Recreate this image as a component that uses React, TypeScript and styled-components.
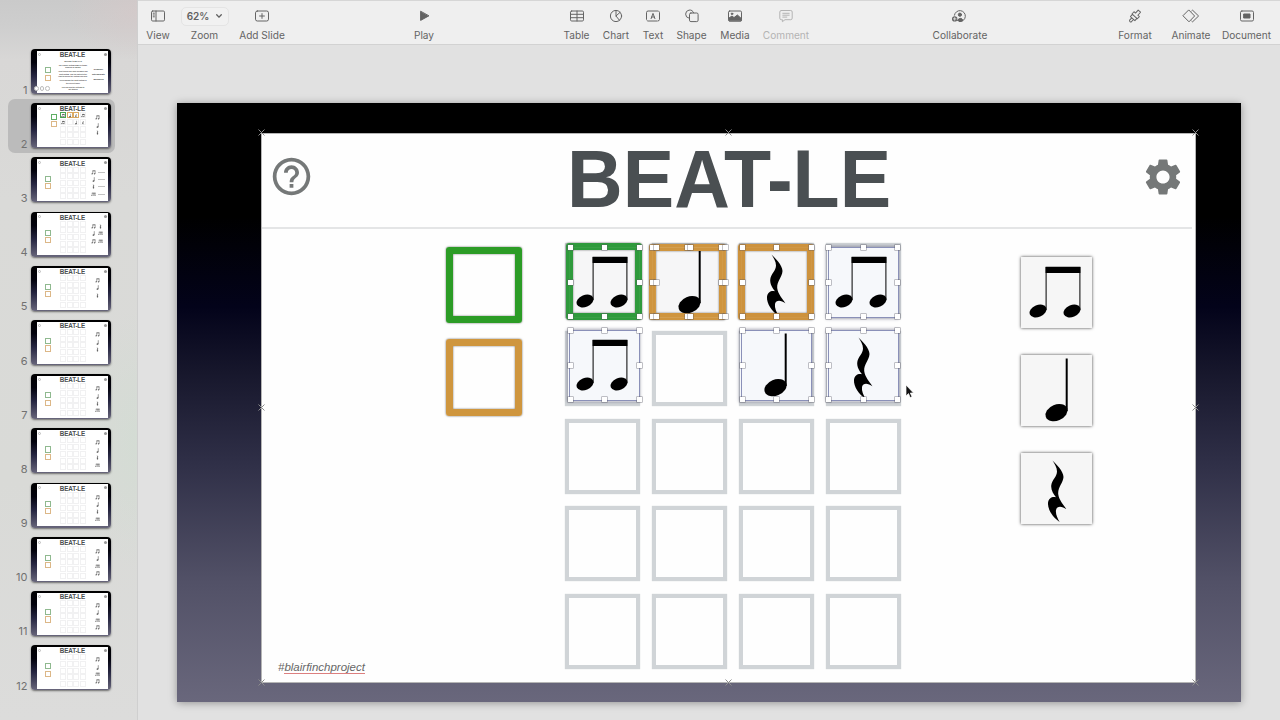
import React from 'react';
import styled, { createGlobalStyle } from 'styled-components';
import { MdHelpOutline, MdSettings } from 'react-icons/md';

const Global = createGlobalStyle`
  * { box-sizing: border-box; }
  body { margin: 0; font-family: Inter, "Liberation Sans", sans-serif; background: #e1e1e1; }
`;

/* ---------- window ---------- */

const Window = styled.div`
  display: flex;
  width: 1280px;
  height: 720px;
  overflow: hidden;
  background: #e1e1e1;
`;

const Main = styled.div`
  flex: 1;
  min-width: 0;
  display: flex;
  flex-direction: column;
`;

/* ---------- toolbar ---------- */

const Toolbar = styled.header`
  display: flex;
  height: 45px;
  flex: none;
  background: #efefef;
  border-top: 1px solid #d6d6d6;
  border-bottom: 1px solid #d2d2d2;
`;

const Tool = styled.div<{ $w: number; $ml?: number; $dim?: boolean }>`
  width: ${p => p.$w}px;
  margin-left: ${p => p.$ml ?? 0}px;
  display: flex;
  flex-direction: column;
  align-items: center;
  color: ${p => (p.$dim ? '#b4b4b4' : '#646464')};
`;

const ToolIcon = styled.div`
  height: 20px;
  margin-top: 5px;
  display: flex;
  align-items: center;
  justify-content: center;
  svg { display: block; }
`;

const ToolLabel = styled.div`
  margin-top: 2px;
  font-size: 10.100px;
  line-height: 14px;
  white-space: nowrap;
`;

const ZoomBox = styled.div`
  display: flex;
  align-items: center;
  justify-content: center;
  gap: 7px;
  width: 48px;
  height: 19px;
  border: 1px solid #e4e4e4;
  border-radius: 5px;
  background: #f1f1f1;
  font-size: 10px;
  font-weight: 600;
  color: #606060;
`;

const Icon = ({ children, w = 18, h = 16 }: { children: React.ReactNode; w?: number; h?: number }) => (
  <svg width={w} height={h} viewBox={`0 0 ${w} ${h}`} fill="none" stroke="currentColor" strokeWidth="1" strokeLinecap="round" strokeLinejoin="round">
    {children}
  </svg>
);

const icons = {
  view: <Icon><rect x="2.500" y="3" width="13" height="10" rx="1.200" /><path d="M7 3v10M4.200 5.200h1.200M4.200 7h1.200M4.200 8.800h1.200" /></Icon>,
  add: <Icon><rect x="2.500" y="3" width="13" height="10" rx="1.800" /><path d="M9 5.600v4.800M6.600 8h4.800" /></Icon>,
  play: <Icon><path d="M5.600 3.600v8.800L13.600 8z" fill="currentColor" /></Icon>,
  table: <Icon><rect x="2.500" y="3" width="13" height="10" rx="1.200" /><path d="M2.500 6.300h13M2.500 9.700h13M9 3v10" /></Icon>,
  chart: <Icon><circle cx="9" cy="8" r="5.600" /><path d="M9 2.400V8l3.400 4.200M9 8l4-3.600" /></Icon>,
  text: (
    <Icon>
      <rect x="2.500" y="3" width="13" height="10" rx="1.600" strokeDasharray="10 1" />
      <path d="M7.100 10.600 9 5.400l1.900 5.200M7.800 9h2.400" />
    </Icon>
  ),
  shape: <Icon><path d="M6 10.200a4.100 4.100 0 1 1 4.600-5.400" /><rect x="6.500" y="5" width="8.600" height="8.600" rx="1.400" /></Icon>,
  media: (
    <Icon>
      <rect x="2.500" y="3" width="13" height="10" rx="1.200" />
      <path d="M3 12.600V10l3-2 2 1.600L11.400 7l3.800 3.400v2.200z" fill="currentColor" />
      <circle cx="6" cy="5.800" r=".8" fill="currentColor" />
    </Icon>
  ),
  comment: <Icon><path d="M4.300 2.500h9.400a1.500 1.500 0 0 1 1.500 1.500v6.200a1.500 1.500 0 0 1-1.500 1.500H8l-2.600 2v-2H4.300a1.500 1.500 0 0 1-1.500-1.500V4a1.500 1.500 0 0 1 1.500-1.500zM5.800 5.300h6.400M5.800 7.200h6.400M5.800 9.100h4" /></Icon>,
  collab: (
    <Icon>
      <path d="M3.400 7.200a5.500 5.500 0 1 1 5 6.400" />
      <circle cx="8.900" cy="6.700" r="1.600" fill="currentColor" />
      <path d="M6.900 12.600c0-3 4.600-3 5 0-1.400 1-3.400 1.200-5 0z" fill="currentColor" />
      <circle cx="3.700" cy="10.900" r="2.700" fill="currentColor" stroke="none" />
      <path d="M3.700 9.600v2.600M2.400 10.900h2.600" stroke="#efefef" strokeWidth=".8" />
    </Icon>
  ),
  format: <Icon><g transform="rotate(42 9 8)"><path d="M7.400 1.500h3.200v4h2v3H5.400v-3h2zM6 8.500v3h6v-3M7.800 11.500v3.200c.3 1 2.100 1 2.400 0v-3.200" /></g></Icon>,
  animate: <Icon><path d="M7 2.200 12.600 8 7 13.800 1.200 8zM9.800 2.800l.8-.6L16.600 8l-6 5.800-.8-.6" /></Icon>,
  doc: <Icon><rect x="2.500" y="3" width="13" height="10" rx="1.400" /><rect x="6" y="6" width="6" height="4" fill="currentColor" /></Icon>,
};

/* ---------- music symbols ---------- */

type Sym = 'eighths' | 'quarter' | 'rest' | 'sixteenths';

const Drawing = styled.svg`
  display: block;
`;

const Music = ({ kind, size = 71, bold = 0 }: { kind: Sym; size?: number; bold?: number }) => (
  <Drawing width={size} height={size} viewBox="0 0 71 71" fill="#000" stroke="#000" strokeWidth={bold}>
    {kind === 'eighths' && (
      <>
        <path d="M24.600 9.700h34.800v6.200H24.600z" />
        <path d="M24.600 10h1v43h-1zM58.400 10h1v43h-1z" />
        <ellipse cx="17" cy="54" rx="8.900" ry="5.900" transform="rotate(-22 17 54)" />
        <ellipse cx="51" cy="54" rx="8.900" ry="5.900" transform="rotate(-22 51 54)" />
      </>
    )}
    {kind === 'quarter' && (
      <>
        <path d="M44.700 3.500h2V56h-2z" />
        <ellipse cx="35.500" cy="57.600" rx="11.500" ry="8" transform="rotate(-22 35.500 57.600)" />
      </>
    )}
    {kind === 'rest' && (
      <path d="M31.500 7.500C35 11 42.500 18 42.500 24C42.200 30 36.800 34 37.200 41C38 47 42 51 45.400 56.200C41 53 36 52.500 35 57C34.400 61 36.500 65 38.600 68.900C32 64.500 26.500 56.500 27 50C27.500 45 31.500 43.300 35 44.300C32.500 41 29.600 37 30.300 32C31 27 36 23.500 36 18.500C36 14.500 33.500 10.500 31.500 7.500Z" />
    )}
    {kind === 'sixteenths' && (
      <>
        <path d="M12 12h54v6H12zM12 26h54v5H12zM12 12h2v42h-2zM29 12h2v42h-2zM46 12h2v42h-2zM64 12h2v42h-2z" />
        <path d="M2 50h12v7H2zM20 50h11v7H20zM37 50h11v7H37zM54 50h12v7H54z" />
      </>
    )}
  </Drawing>
);

/* ---------- slide navigator ---------- */

const Sidebar = styled.nav`
  width: 138px;
  flex: none;
  padding: 44.900px 0 0 8px;
  border-right: 1px solid #cfcfcf;
  background:
    radial-gradient(70px 50px at 138px 10px, rgba(218, 200, 200, 0.5), transparent),
    radial-gradient(60px 130px at 138px 440px, rgba(205, 222, 208, 0.45), transparent),
    linear-gradient(#cacaca 0, #cecece 26px, #d8d7d6 60px, #dadad8 200px, #d9dad7 480px, #dcdcdb 100%);
`;

const SlideRow = styled.div<{ $on?: boolean }>`
  display: flex;
  align-items: flex-end;
  width: 107px;
  height: 54.200px;
  padding: 0 4px 5px 0;
  border-radius: 7px;
  background: ${p => (p.$on ? '#bbbbbb' : 'transparent')};
`;

const SlideNo = styled.div`
  width: 19.500px;
  margin-right: 3.500px;
  text-align: right;
  font: 11px/13px Inter, sans-serif;
  margin-bottom: -2.500px;
  color: #717171;
`;

const Thumb = styled.div`
  width: 79.500px;
  height: 45px;
  padding: 1.800px 2.600px 1.200px 6px;
  border-radius: 4px;
  overflow: hidden;
  background: linear-gradient(#000 0, #02020c 30%, #252540 60%, #68667b 100%);
  box-shadow: 0 1px 2px rgba(0, 0, 0, 0.5);
`;

const MiniBoard = styled.div`
  position: relative;
  height: 100%;
  background: #fff;
`;

const MiniTitle = styled.div`
  padding-top: 0.300px;
  text-align: center;
  font: bold 6.300px/7px "Liberation Sans", sans-serif;
  letter-spacing: -0.180px;
  color: #4b4f52;
`;

const MiniDot = styled.i<{ $right?: boolean }>`
  position: absolute;
  top: 2px;
  ${p => (p.$right ? 'right: 1px; background: #999;' : 'left: 1px; border: 0.500px solid #bbb;')}
  width: 3px;
  height: 3px;
  border-radius: 50%;
`;

const MiniBody = styled.div<{ $shift?: boolean }>`
  display: grid;
  grid-template-columns: ${p => (p.$shift ? '13.500px 6px 3.500px 26px 1fr' : '7.500px 6px 9.500px 26px 1fr')};
`;

const MiniLegend = styled.div<{ $top: number }>`
  grid-column: 2;
  padding-top: ${p => p.$top}px;
  display: flex;
  flex-direction: column;
  gap: 1.200px;
`;

const MiniFrame = styled.i<{ $c: string }>`
  height: 6.200px;
  border: 1px solid ${p => p.$c};
`;

const MiniGrid = styled.div`
  grid-column: 4;
  display: grid;
  grid-template-columns: repeat(4, 6px);
  grid-auto-rows: 6px;
  gap: 0.700px;
`;

const MiniCell = styled.div<{ $c?: string }>`
  display: flex;
  align-items: center;
  justify-content: center;
  border: 1px solid ${p => p.$c ?? '#f1f1f2'};
`;

const MiniPalette = styled.div<{ $cols: number }>`
  grid-column: 5;
  display: grid;
  grid-template-columns: repeat(${p => p.$cols}, 5px);
  grid-auto-rows: 5px;
  gap: 2.400px;
  padding-top: 3px;
  margin-left: ${p => (p.$cols > 1 ? 4.5 : 8.5)}px;
  align-items: center;
  opacity: 0.75;
`;

const MiniRule = styled.i`
  width: 7px;
  height: 1px;
  background: #b0b0b0;
`;

const MiniText = styled.div`
  grid-column: 4;
  display: flex;
  flex-direction: column;
  align-items: center;
  width: 26px;
  padding-top: 1.500px;
  text-align: center;
  font: bold 1.750px/2.400px "Liberation Sans", sans-serif;
  color: #444;
  p { margin: 0 0 1.700px; white-space: nowrap; }
`;

const MiniLevels = styled.div`
  grid-column: 5;
  padding: 9px 0 0 3px;
  text-align: center;
  font: bold 2.200px/5px "Liberation Sans", sans-serif;
  color: #333;
`;

const MiniRings = styled.div`
  position: absolute;
  left: -3px;
  bottom: 2px;
  display: flex;
  gap: 1px;
  i { width: 4.600px; height: 4.600px; border: 0.500px solid #bbb; border-radius: 50%; background: #fff; }
`;

const GREEN = '#8fb98f';
const ORANGE = '#dcb787';

const three: Sym[] = ['eighths', 'quarter', 'rest'];
const four: Sym[] = [...three, 'sixteenths'];
const mixed: Sym[] = ['eighths', 'quarter', 'sixteenths', 'eighths'];

const palettes: (Sym | 'rule')[][] = [
  [],
  three,
  ['eighths', 'rule', 'quarter', 'rule', 'rest', 'rule', 'sixteenths', 'rule'],
  ['eighths', 'rest', 'quarter', 'sixteenths', 'eighths', 'sixteenths'],
  three,
  three,
  four,
  four,
  four,
  mixed,
  mixed,
  mixed,
];

const guesses: { c?: string; s?: Sym }[] = [
  { c: '#4ba454', s: 'eighths' },
  { c: '#dcaa62', s: 'quarter' },
  { c: '#dcaa62', s: 'rest' },
  { s: 'eighths' },
  { s: 'eighths' },
  {},
  { s: 'quarter' },
  { s: 'rest' },
];

const MiniSlide = ({ n }: { n: number }) => (
  <Thumb>
    <MiniBoard>
      <MiniDot />
      <MiniDot $right />
      <MiniTitle>BEAT-LE</MiniTitle>
      <MiniBody $shift={n === 2}>
        <MiniLegend $top={n === 2 ? 1.2 : 9}>
          <MiniFrame $c={n === 2 ? '#5fae64' : GREEN} />
          <MiniFrame $c={ORANGE} />
        </MiniLegend>
        {n === 1 ? (
          <>
            <MiniText>
              <p>Welcome to BEAT-LE</p>
              <p>The classic rhythm game of today,<br />inspired by Wordle</p>
              <p>Your teacher will play a hidden four<br />beat rhythm. Use the notes to the<br />right to guess the rhythm you hear.</p>
              <p>Green means the right rhythm in<br />the correct place</p>
              <p>You can find the settings to<br />get started</p>
            </MiniText>
            <MiniLevels>beginner<br />intermediate<br />advanced</MiniLevels>
          </>
        ) : (
          <>
            <MiniGrid>
              {Array.from({ length: 20 }, (_, i) => {
                const g = n === 2 ? guesses[i] : undefined;
                return <MiniCell key={i} $c={g?.c}>{g?.s && <Music kind={g.s} size={5} bold={2} />}</MiniCell>;
              })}
            </MiniGrid>
            <MiniPalette $cols={n === 3 || n === 4 ? 2 : 1}>
              {palettes[n - 1].map((s, i) => (s === 'rule' ? <MiniRule key={i} /> : <Music key={i} kind={s} size={5} bold={s === 'sixteenths' ? 0 : 3} />))}
            </MiniPalette>
          </>
        )}
      </MiniBody>
      {n === 1 && <MiniRings><i /><i /><i /></MiniRings>}
    </MiniBoard>
  </Thumb>
);

/* ---------- slide canvas ---------- */

const Stage = styled.main`
  flex: 1;
  padding: 58px 39px 18px 39px;
  background: #e1e1e1;
`;

const Slide = styled.section`
  width: 1064px;
  height: 599px;
  padding: 29.500px 45px 19px 84px;
  background: linear-gradient(#000 0, #000 19%, #03031a 34%, #17172c 45%, #2f2f47 60%, #525167 80%, #69677c 100%);
  box-shadow: 0 1px 8px rgba(0, 0, 0, 0.35);
`;

const Board = styled.div`
  position: relative;
  width: 935px;
  height: 550.500px;
  display: flex;
  flex-direction: column;
  background: #fefefe;
  border: 1px solid #b5b5b5;
`;

const BoardHead = styled.div`
  display: flex;
  align-items: center;
  justify-content: space-between;
  height: 95px;
  flex: none;
  margin-right: 3px;
  padding: 0 7px 7px 7px;
  border-bottom: 2px solid #e4e5e6;
  color: #757878;
  svg { display: block; }
`;

const Title = styled.h1`
  margin: 0 -22px 0 -18px;
  padding-top: 5px;
  font: bold 81.400px/84px "Liberation Sans", sans-serif;
  transform: scaleX(0.947);
  color: #4a4f52;
`;

const BoardBody = styled.div`
  display: flex;
  align-items: flex-start;
`;

const Legend = styled.div`
  display: flex;
  flex-direction: column;
  gap: 16px;
  margin: 18px 0 0 184px;
`;

const Frame = styled.div<{ $c: string; $w?: number; $h?: number }>`
  width: ${p => p.$w ?? 76}px;
  height: ${p => p.$h ?? 76.5}px;
  border: 7px solid ${p => p.$c};
  border-radius: 3px;
  box-shadow: 0 0 2px rgba(0, 0, 0, 0.65), inset 0 0 2px rgba(0, 0, 0, 0.6);
`;

const Grid = styled.div`
  display: grid;
  grid-template-columns: repeat(4, 75px);
  grid-auto-rows: 75px;
  column-gap: 12.100px;
  row-gap: 12.800px;
  margin: 14.500px 0 0 43px;
`;

const Cell = styled.div`
  border: 4px solid #d0d4d7;
  box-shadow: 0 0 1px #ced2d5;
`;

const Palette = styled.div`
  display: flex;
  flex-direction: column;
  gap: 27px;
  margin: 28px 0 0 119.700px;
`;

const Card = styled.div`
  width: 71px;
  height: 71px;
  background: #f6f6f6;
  box-shadow: 0 0 3px rgba(0, 0, 0, 0.75);
`;

const HashTag = styled.div`
  margin: -9.500px 0 0 16px;
  font: italic 11.500px/14px "Liberation Sans", sans-serif;
  color: #666;
  span { border-bottom: 1px solid #dc7f7f; display: inline-block; line-height: 11px; }
`;

/* Objects dropped freely on the slide */
const Placed = styled.div<{ $x: number; $y: number }>`
  position: absolute;
  left: ${p => p.$x - 262}px;
  top: ${p => p.$y - 134}px;
`;

const Piece = styled.div<{ $bare?: boolean }>`
  width: 71px;
  height: 71px;
  background: ${p => (p.$bare ? '#f6f8fb' : '#f6f6f7')};
  box-shadow: ${p => (p.$bare ? '0 0 3px 1px rgba(70, 72, 100, 0.45)' : 'none')};
`;

const Selection = styled.div<{ $w: number; $h: number; $faint?: boolean }>`
  position: relative;
  width: ${p => p.$w}px;
  height: ${p => p.$h}px;
  border: 1px solid ${p => (p.$faint ? 'rgba(255, 255, 255, 0.05)' : '#8a90b8')};
`;

const Handle = styled.i<{ $l: number; $t: number }>`
  position: absolute;
  left: calc(${p => p.$l}% - 2.500px);
  top: calc(${p => p.$t}% - 2.500px);
  width: 5px;
  height: 5px;
  background: #fff;
  box-shadow: 0 0 0 0.600px rgba(90, 90, 100, 0.6);
`;

const spots = [[0, 0], [50, 0], [100, 0], [0, 50], [100, 50], [0, 100], [50, 100], [100, 100]];

const Handles = ({ faint }: { faint?: boolean }) => (
  <Selection $w={71} $h={71} $faint={faint}>
    {spots.map(([l, t]) => <Handle key={`${l}-${t}`} $l={l} $t={t} />)}
  </Selection>
);

type Item = { s: Sym; x: number; y: number; frame?: { c: string; x: number; y: number; w?: number } };

const items: Item[] = [
  { s: 'eighths', x: 568.4, y: 247, frame: { c: '#2f9a3c', x: 566.2, y: 243.8 } },
  { s: 'quarter', x: 654.4, y: 247, frame: { c: '#cf953f', x: 649, y: 244, w: 77 } },
  { s: 'rest', x: 740.4, y: 247, frame: { c: '#cd923d', x: 738, y: 244.3 } },
  { s: 'eighths', x: 826.9, y: 247 },
  { s: 'eighths', x: 568.4, y: 330.3 },
  { s: 'quarter', x: 740.4, y: 330.3 },
  { s: 'rest', x: 826.9, y: 330.3 },
];

const Cross = ({ x, y }: { x: number; y: number }) => (
  <Placed $x={x - 3.5} $y={y - 3.5}>
    <Drawing width="7" height="7" viewBox="0 0 7 7" stroke="#8d8d8d" strokeWidth="1">
      <path d="M.5.5l6 6M6.500.5l-6 6" />
    </Drawing>
  </Placed>
);

const tools: { k: keyof typeof icons | 'zoom'; label: string; w: number; ml?: number; dim?: boolean }[] = [
  { k: 'view', label: 'View', w: 40 },
  { k: 'zoom', label: 'Zoom', w: 53 },
  { k: 'add', label: 'Add Slide', w: 62 },
  { k: 'play', label: 'Play', w: 62, ml: 100 },
  { k: 'table', label: 'Table', w: 43, ml: 100 },
  { k: 'chart', label: 'Chart', w: 36 },
  { k: 'text', label: 'Text', w: 38 },
  { k: 'shape', label: 'Shape', w: 39 },
  { k: 'media', label: 'Media', w: 48 },
  { k: 'comment', label: 'Comment', w: 54, dim: true },
  { k: 'collab', label: 'Collaborate', w: 70, ml: 112 },
  { k: 'format', label: 'Format', w: 60, ml: 110 },
  { k: 'animate', label: 'Animate', w: 52 },
  { k: 'doc', label: 'Document', w: 59 },
];

export default function App() {
  return (
    <Window>
      <Global />
      <Sidebar>
        {palettes.map((_, i) => (
          <SlideRow key={i} $on={i === 1}>
            <SlideNo>{i + 1}</SlideNo>
            <MiniSlide n={i + 1} />
          </SlideRow>
        ))}
      </Sidebar>
      <Main>
        <Toolbar>
          {tools.map(t => (
            <Tool key={t.label} $w={t.w} $ml={t.ml} $dim={t.dim}>
              <ToolIcon>
                {t.k === 'zoom' ? (
                  <ZoomBox>
                    62%
                    <svg width="6" height="4" viewBox="0 0 6 4" fill="none" stroke="currentColor" strokeWidth="1.300" strokeLinecap="round"><path d="M.7.7 3 3.100 5.300.7" /></svg>
                  </ZoomBox>
                ) : icons[t.k]}
              </ToolIcon>
              <ToolLabel>{t.label}</ToolLabel>
            </Tool>
          ))}
        </Toolbar>
        <Stage>
          <Slide>
            <Board>
              <BoardHead>
                <MdHelpOutline size={45} />
                <Title>BEAT-LE</Title>
                <MdSettings size={44} />
              </BoardHead>
              <BoardBody>
                <Legend>
                  <Frame $c="#2c9c26" />
                  <Frame $c="#cf963e" />
                </Legend>
                <Grid>
                  {Array.from({ length: 20 }, (_, i) => <Cell key={i} />)}
                </Grid>
                <Palette>
                  {three.map(s => <Card key={s}><Music kind={s} /></Card>)}
                </Palette>
              </BoardBody>
              <HashTag>#<span>blairfinchproject</span></HashTag>

              {items.map((it, i) => (
                <React.Fragment key={i}>
                  <Placed $x={it.x} $y={it.y}><Piece $bare={!it.frame}><Music kind={it.s} /></Piece></Placed>
                  {it.frame && <Placed $x={it.frame.x} $y={it.frame.y}><Frame $c={it.frame.c} $w={it.frame.w} /></Placed>}
                  {it.frame?.w && <Placed $x={651.6} $y={247}><Handles faint /></Placed>}
                  <Placed $x={it.x + 0.6} $y={it.y}><Handles faint={!!it.frame} /></Placed>
                </React.Fragment>
              ))}

              <Cross x={261.500} y={133} />
              <Cross x={728.500} y={133} />
              <Cross x={1195.500} y={133} />
              <Cross x={261.500} y={408} />
              <Cross x={1195.500} y={408} />
              <Cross x={261.500} y={683} />
              <Cross x={728.500} y={683} />
              <Cross x={1195.500} y={683} />
              <Placed $x={905} $y={384}>
                <Drawing width="9" height="15" viewBox="0 0 9 15">
                  <path d="M1 1v11l2.500-2.400 1.700 4 1.800-.8-1.700-3.800H8.500z" fill="#111" stroke="#fff" strokeWidth=".7" />
                </Drawing>
              </Placed>
            </Board>
          </Slide>
        </Stage>
      </Main>
    </Window>
  );
}
